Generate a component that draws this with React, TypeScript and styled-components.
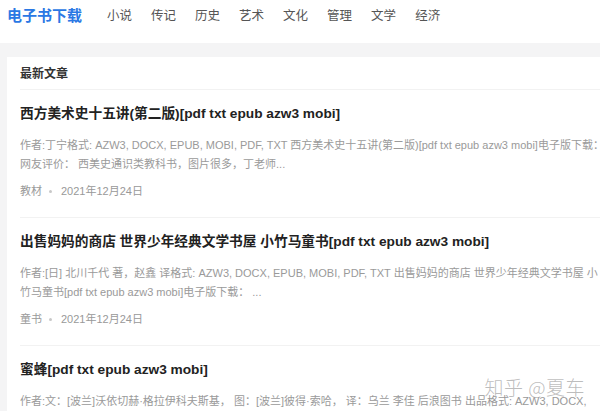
import React from "react";
import styled, { createGlobalStyle } from "styled-components";

const Global = createGlobalStyle`
  html, body { margin: 0; padding: 0; }
  body {
    background: #f4f4f5;
    overflow: hidden;
    font-family: "Liberation Sans", "Noto Sans CJK SC", sans-serif;
  }
`;

const Page = styled.div`
  position: relative;
  width: 600px;
  height: 411px;
  overflow: hidden;
  background: #f4f4f5;
`;

const Header = styled.header`
  display: flex;
  align-items: center;
  height: 43px;
  box-sizing: border-box;
  padding: 0 0 11px 7px;
  background: #fff;
`;

const Logo = styled.div`
  font-size: 15px;
  line-height: 20px;
  font-weight: 700;
  color: #2a78e4;
  margin-right: 25px;
`;

const Nav = styled.nav`
  display: flex;
  gap: 19px;
`;

const NavItem = styled.a`
  font-size: 12.5px;
  line-height: 20px;
  color: #555;
  text-decoration: none;
`;

const Main = styled.main`
  padding: 14px 0 0 7px;
`;

const Card = styled.section`
  background: #fff;
  padding-left: 13px;
  min-height: 360px;
`;

const CardHead = styled.h2`
  margin: 0;
  height: 33px;
  padding-top: 2px;
  line-height: 31px;
  font-size: 12px;
  font-weight: 700;
  color: #333;
  border-bottom: 1px solid #f2f2f2;
  box-sizing: border-box;
`;

const Article = styled.article`
  padding: 14px 0 18px;
  border-bottom: 1px solid #f2f2f2;
`;

const Title = styled.h3`
  margin: 0;
  font-size: 13.7px;
  line-height: 20px;
  font-weight: 700;
  color: #222;
  white-space: nowrap;
`;

const Excerpt = styled.div`
  margin-top: 12px;
  font-size: 11px;
  line-height: 19px;
  color: #9a9a9a;
`;

const Line = styled.div`
  white-space: nowrap;
  overflow: hidden;
`;

const Meta = styled.div`
  display: flex;
  align-items: center;
  margin-top: 9px;
  font-size: 11px;
  line-height: 16px;
  color: #999;
`;

const Dot = styled.span`
  width: 3px;
  height: 3px;
  border-radius: 50%;
  background: #c8c8c8;
  margin: 0 9px 0 7px;
`;

const Watermark = styled.div`
  position: absolute;
  right: 15px;
  bottom: 12px;
  font-size: 19px;
  line-height: 24px;
  color: rgba(160, 160, 160, 0.7);
  letter-spacing: 0.5px;
  font-family: "Noto Sans CJK SC", sans-serif;
  font-weight: 300;
`;

const navItems = ["小说", "传记", "历史", "艺术", "文化", "管理", "文学", "经济"];

const articles = [
  {
    title: "西方美术史十五讲(第二版)[pdf txt epub azw3 mobi]",
    lines: [
      "作者:丁宁格式: AZW3, DOCX, EPUB, MOBI, PDF, TXT 西方美术史十五讲(第二版)[pdf txt epub azw3 mobi]电子版下载：",
      "网友评价：  西美史通识类教科书，图片很多，丁老师...",
    ],
    tag: "教材",
    date: "2021年12月24日",
  },
  {
    title: "出售妈妈的商店 世界少年经典文学书屋 小竹马童书[pdf txt epub azw3 mobi]",
    lines: [
      "作者:[日] 北川千代 著，赵鑫 译格式: AZW3, DOCX, EPUB, MOBI, PDF, TXT 出售妈妈的商店 世界少年经典文学书屋 小",
      "竹马童书[pdf txt epub azw3 mobi]电子版下载：  ...",
    ],
    tag: "童书",
    date: "2021年12月24日",
  },
  {
    title: "蜜蜂[pdf txt epub azw3 mobi]",
    lines: [
      "作者:文：[波兰]沃依切赫·格拉伊科夫斯基，  图：[波兰]彼得·索哈，  译：乌兰 李佳 后浪图书 出品格式: AZW3, DOCX,",
      "",
    ],
    tag: "",
    date: "",
  },
];

export default function App() {
  return (
    <Page>
      <Global />
      <Header>
        <Logo>电子书下载</Logo>
        <Nav>
          {navItems.map((n) => (
            <NavItem key={n} href="#">
              {n}
            </NavItem>
          ))}
        </Nav>
      </Header>
      <Main>
        <Card>
          <CardHead>最新文章</CardHead>
          {articles.map((a) => (
            <Article key={a.title}>
              <Title>{a.title}</Title>
              <Excerpt>
                {a.lines.map((l, i) => (
                  <Line key={i}>{l || "\u00a0"}</Line>
                ))}
              </Excerpt>
              {a.tag && (
                <Meta>
                  <span>{a.tag}</span>
                  <Dot />
                  <span>{a.date}</span>
                </Meta>
              )}
            </Article>
          ))}
        </Card>
      </Main>
      <Watermark>知乎 @夏车</Watermark>
    </Page>
  );
}
